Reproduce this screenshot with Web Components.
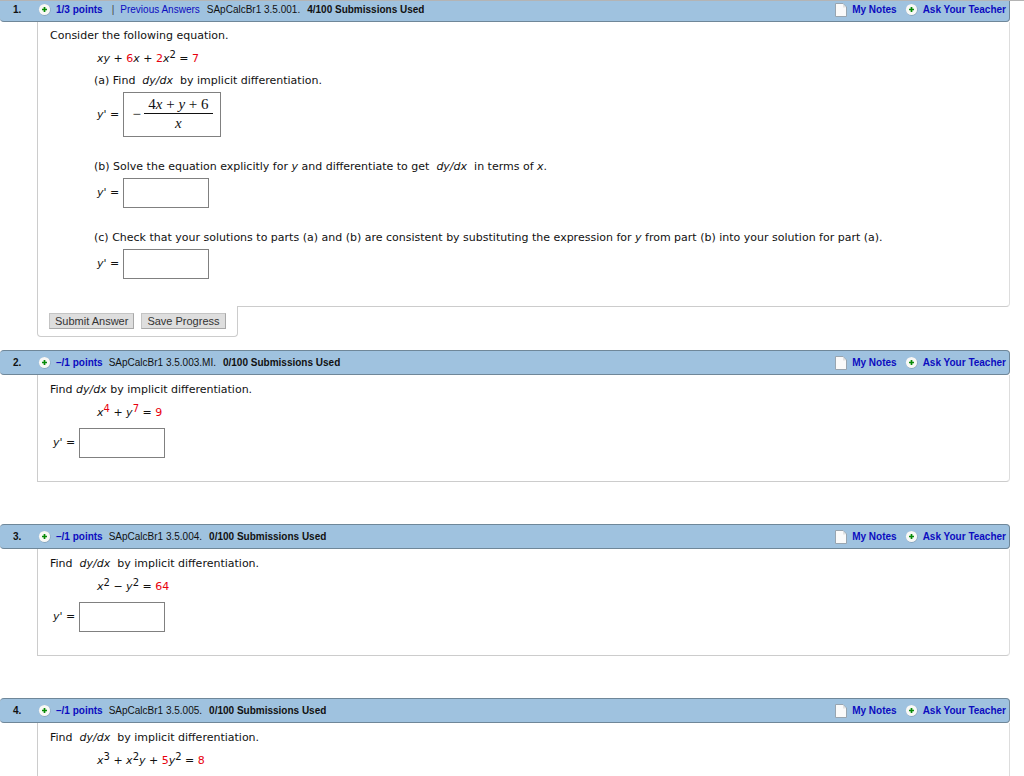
<!DOCTYPE html>
<html lang="en">
<head>
<meta charset="utf-8">
<title>Homework: Implicit Differentiation</title>
<style>
  body {
    margin: 0;
    background: #fff;
    color: #111;
    font: 11px/22px "DejaVu Sans", Verdana, sans-serif;
  }
  p { margin: 0; }
  .equation { padding-left: 47px; line-height: 23px; }
  .part { padding-left: 44px; }
  .equation b { font-weight: normal; color: #e8000d; }
  sup { font-size: 10px; line-height: 0; vertical-align: 4px; }
</style>
</head>
<body>
<homework-page>
  <homework-question number="1" points="1/3" code="SApCalcBr1 3.5.001." used="4/100" previous actions>
    <p>Consider the following equation.</p>
    <p class="equation"><i>xy</i> + <b>6</b><i>x</i> + <b>2</b><i>x</i><sup>2</sup> = <b>7</b></p>
    <p class="part">(a) Find &nbsp;<i>dy/dx</i>&nbsp; by implicit differentiation.</p>
    <answer-field indent><fraction-value><span slot="top">4<i>x</i> + <i>y</i> + 6</span><i slot="bottom">x</i></fraction-value></answer-field>
    <p class="part">(b) Solve the equation explicitly for <i>y</i> and differentiate to get &nbsp;<i>dy/dx</i>&nbsp; in terms of <i>x</i>.</p>
    <answer-field indent></answer-field>
    <p class="part">(c) Check that your solutions to parts (a) and (b) are consistent by substituting the expression for <i>y</i> from part (b) into your solution for part (a).</p>
    <answer-field indent last></answer-field>
  </homework-question>
  <homework-question number="2" points="–/1" code="SApCalcBr1 3.5.003.MI." used="0/100">
    <p>Find <i>dy/dx</i> by implicit differentiation.</p>
    <p class="equation"><i>x</i><sup><b>4</b></sup> + <i>y</i><sup><b>7</b></sup> = <b>9</b></p>
    <answer-field single></answer-field>
  </homework-question>
  <homework-question number="3" points="–/1" code="SApCalcBr1 3.5.004." used="0/100">
    <p>Find &nbsp;<i>dy/dx</i>&nbsp; by implicit differentiation.</p>
    <p class="equation"><i>x</i><sup>2</sup> − <i>y</i><sup>2</sup> = <b>64</b></p>
    <answer-field single></answer-field>
  </homework-question>
  <homework-question number="4" points="–/1" code="SApCalcBr1 3.5.005." used="0/100">
    <p>Find &nbsp;<i>dy/dx</i>&nbsp; by implicit differentiation.</p>
    <p class="equation"><i>x</i><sup>3</sup> + <i>x</i><sup>2</sup><i>y</i> + <b>5</b><i>y</i><sup>2</sup> = <b>8</b></p>
  </homework-question>
</homework-page>

<script>
class Component extends HTMLElement {
  connectedCallback() {
    if (this.shadowRoot) return;
    this.attachShadow({ mode: "open" }).innerHTML = this.render();
  }
}

customElements.define("homework-page", class extends Component {
  render() {
    return `<style>
      :host { display: block; height: 100vh; box-sizing: border-box; overflow: auto; scrollbar-width: none; border-top: 1px solid #b4b4b4; }
      main { margin: -4px 14px 0 0; }
    </style><main><slot></slot></main>`;
  }
});

customElements.define("plus-icon", class extends Component {
  render() {
    return `<style>:host { display: block; width: 13px; height: 13px; } svg { display: block; }</style>
      <svg width="13" height="13" viewBox="0 0 13 13" aria-hidden="true">
        <circle cx="6.8" cy="7" r="5.8" fill="#7f9bb3"/>
        <circle cx="6.5" cy="6.5" r="5.6" fill="#f8f8f6"/>
        <path d="M6.500 4v5M4 6.500h5" stroke="#078a07" stroke-width="1.7" fill="none"/>
      </svg>`;
  }
});

customElements.define("note-icon", class extends Component {
  render() {
    return `<style>:host { display: block; width: 12px; height: 14px; } svg { display: block; }</style>
      <svg width="12" height="14" viewBox="0 0 12 14" aria-hidden="true">
        <path d="M.5.5H8L11.5 4v9.5H.5z" fill="#fafafa" stroke="#98a5b0"/>
        <path d="M1 1h7v3.5h3V13H1z" fill="#fafafa"/>
        <path d="M8 1v3.500h3z" fill="#e2e2e2"/>
      </svg>`;
  }
});

customElements.define("question-header", class extends Component {
  render() {
    const a = name => this.getAttribute(name);
    const previous = this.hasAttribute("previous")
      ? `<span class="bar">|</span><a class="plain" href="#previous">Previous Answers</a>` : "";
    return `<style>
      :host { display: block; }
      header {
        display: flex; align-items: center; box-sizing: border-box; height: 25px;
        padding-right: 3px; border: 1px solid #6f8799; border-width: 1px 1px 1px 0; border-radius: 4px;
        background: #9fc2df; color: #111; white-space: nowrap;
        font: 10px/14px "Liberation Sans", Arial, sans-serif;
      }
      .number { width: 38px; padding-left: 13px; box-sizing: border-box; font-weight: bold; }
      a { color: #0c0cc0; font-weight: bold; text-decoration: none; }
      .plain { font-weight: normal; margin-right: 7px; }
      .points { margin: 0 6px 0 5px; }
      .bar { color: #444; margin: 0 6px 0 3px; }
      .used { font-weight: bold; margin-left: 7px; }
      nav { margin-left: auto; display: flex; align-items: center; }
      nav a:first-of-type { margin: 0 8px 0 5px; }
      nav a:last-of-type { margin-left: 5px; }
    </style>
    <header>
      <span class="number">${a("number")}.</span>
      <plus-icon></plus-icon>
      <a class="points" href="#points">${a("points")} points</a>${previous}
      <span>${a("code")}</span>
      <span class="used">${a("used")} Submissions Used</span>
      <nav><note-icon></note-icon><a href="#notes">My Notes</a><plus-icon></plus-icon><a href="#ask">Ask Your Teacher</a></nav>
    </header>`;
  }
});

customElements.define("question-actions", class extends Component {
  render() {
    return `<style>
      :host {
        display: flex; gap: 7px; box-sizing: border-box; width: fit-content;
        margin: -1px 0 0 37px; padding: 7px 11px; background: #fff;
        border: 1px solid #ccc; border-top: 0; border-radius: 0 0 4px 4px;
      }
      button {
        box-sizing: border-box; height: 16px; padding: 0 5px; border: 1px solid #aaa;
        border-color: #c4c4c4 #a8a8a8 #a8a8a8 #c4c4c4; background: #dedede; color: #333;
        font: 11px/14px "Liberation Sans", Arial, sans-serif;
      }
    </style><button type="button">Submit Answer</button><button type="button">Save Progress</button>`;
  }
});

customElements.define("homework-question", class extends Component {
  render() {
    const a = name => this.getAttribute(name);
    const actions = this.hasAttribute("actions");
    return `<style>
      :host { display: block; margin-bottom: 42px; }
      :host([actions]) { margin-bottom: 13px; }
      section {
        margin-left: 37px; padding: 4px 12px 23px; border: 1px solid #ccc; border-top: 0;
        border-right-color: #ddd; border-radius: 0 0 4px 0;
      }
      :host([actions]) section { padding-top: 3px; padding-bottom: 27px; }
    </style>
    <question-header number="${a("number")}" points="${a("points")}" code="${a("code")}" used="${a("used")}"${this.hasAttribute("previous") ? " previous" : ""}></question-header>
    <section><slot></slot></section>
    ${actions ? "<question-actions></question-actions>" : ""}`;
  }
});

customElements.define("fraction-value", class extends Component {
  render() {
    return `<style>
      :host { display: flex; align-items: center; font: 15px/18px "Liberation Serif", "Times New Roman", serif; }
      .fraction { display: flex; flex-direction: column; align-items: center; }
      .top { border-bottom: 1px solid #111; padding: 0 4px; white-space: nowrap; }
      .minus { width: 11px; margin-right: 2px; text-align: center; }
    </style><span class="minus">−</span>
    <span class="fraction"><span class="top"><slot name="top"></slot></span><slot name="bottom"></slot></span>`;
  }
});

customElements.define("answer-field", class extends Component {
  render() {
    const filled = this.firstElementChild !== null;
    const box = filled
      ? `<div class="box" role="textbox" tabindex="0" aria-labelledby="label"><slot></slot></div>`
      : `<input id="answer" type="text" autocomplete="off">`;
    return `<style>
      :host { display: flex; align-items: center; gap: 4px; padding-left: 3px; margin-bottom: 19px; }
      :host([indent]) { padding-left: 47px; }
      :host([last]) { margin-bottom: 0; }
      :host([single]) { margin: 4px 0 0; }
      label { white-space: nowrap; }
      input, .box { box-sizing: border-box; border: 1px solid #808080; background: #fff; }
      input { width: 86px; height: 30px; padding: 2px 4px; font: 15px "Liberation Serif", serif; }
      .box { display: flex; align-items: center; height: 45px; padding: 0 7px 2px; }
    </style><label id="label"${filled ? "" : ` for="answer"`}><i>y'</i> =</label>${box}`;
  }
});
</script>
</body>
</html>
